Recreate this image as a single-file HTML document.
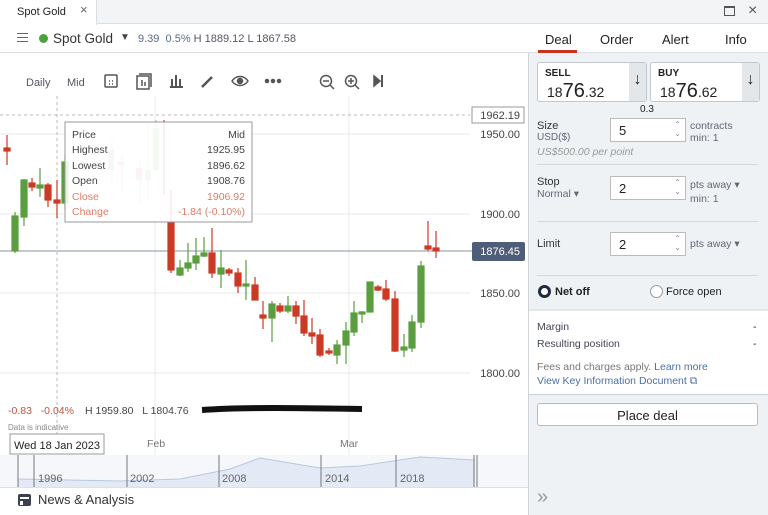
<!DOCTYPE html>
<html><head><meta charset="utf-8"><style>
*{box-sizing:border-box;margin:0;padding:0}
body{width:768px;height:515px;overflow:hidden;background:#fff;font-family:"Liberation Sans",sans-serif;color:#222;position:relative;font-size:12px}
.abs{position:absolute}
.tabbar{left:0;top:0;width:768px;height:24px;background:#f3f4f5;border-bottom:1px solid #dcdfe2}
.tab{left:0;top:0;width:97px;height:25px;background:#fff;border-right:1px solid #dcdfe2;font-size:11px;padding:6px 0 0 17px}
.rp{left:528px;top:53px;width:240px;height:462px;background:#eef2f4;border-left:1px solid #cfd4d8}
.box{background:#fff;border:1px solid #c3c8cc;border-radius:3px}
.lbl{font-size:11px;color:#333}
.gray{color:#667}
</style></head><body>
<div class="abs tabbar"></div>
<div class="abs tab">Spot Gold<span style="position:absolute;left:80px;top:4px;color:#666;font-size:13px;line-height:12px">×</span></div>
<div class="abs" style="left:724px;top:6px;width:11px;height:10px;border:1.5px solid #555;border-top-width:2.5px"></div>
<div class="abs" style="left:748px;top:2px;font-size:16px;color:#555">×</div>
<!-- header -->
<div class="abs" style="left:0;top:24px;width:528px;height:29px;border-bottom:1px solid #dcdfe2"></div>
<div class="abs" style="left:17px;top:33px;width:11px;height:9px;border-top:1.5px solid #666;border-bottom:1.5px solid #666"><div style="margin-top:2.5px;height:1.5px;background:#666"></div></div>
<div class="abs" style="left:39px;top:34px;width:9px;height:9px;border-radius:50%;background:#4aa33a"></div>
<div class="abs" style="left:53px;top:31px;font-size:13.5px;color:#333">Spot Gold</div>
<div class="abs" style="left:120px;top:32px;font-size:10px;color:#444">▼</div>
<div class="abs" style="left:138px;top:33px;font-size:11px;color:#5a6a88">9.39&nbsp; 0.5% <span style="color:#556">H 1889.12 L 1867.58</span></div>
<!-- right tabs -->
<div class="abs" style="left:528px;top:24px;width:240px;height:29px;border-bottom:1px solid #dcdfe2"></div>
<div class="abs" style="left:545px;top:32px;font-size:13px">Deal</div>
<div class="abs" style="left:538px;top:50px;width:39px;height:3px;background:#c8321e"></div>
<div class="abs" style="left:600px;top:32px;font-size:13px">Order</div>
<div class="abs" style="left:662px;top:32px;font-size:13px">Alert</div>
<div class="abs" style="left:725px;top:32px;font-size:13px">Info</div>

<!-- toolbar -->
<div class="abs" style="left:26px;top:77px;font-size:11px;color:#556">Daily</div>
<div class="abs" style="left:67px;top:77px;font-size:11px;color:#556">Mid</div>
<svg class="abs" style="left:100px;top:70px" width="290" height="26" fill="none" stroke="#555" stroke-width="1.5">
<rect x="5" y="5" width="12" height="12" rx="1"/><path d="M9 11h1M12 11h1M9 14h1M12 14h1M15 11h0" />
<rect x="37" y="6" width="12" height="13"/><path d="M39 4h12v13M42 10v6M45 12v4"/>
<path d="M70 17h13M72 9v7M76 5v11M80 9v7" stroke-width="2"/>
<path d="M102 17l10-10" stroke-width="2.5"/>
<path d="M132 11c4-6 12-6 16 0c-4 6-12 6-16 0z"/><circle cx="140" cy="11" r="2.5" fill="#555"/>
<circle cx="167" cy="11" r="1.5" fill="#555"/><circle cx="173" cy="11" r="1.5" fill="#555"/><circle cx="179" cy="11" r="1.5" fill="#555"/>
<circle cx="226" cy="11" r="5.5"/><path d="M223 11h6M230 15l4 4"/>
<circle cx="251" cy="11" r="5.5"/><path d="M248 11h6M251 8v6M255 15l4 4"/>
<path d="M274 6l6 5-6 5z" fill="#555"/><path d="M282 5v12" stroke-width="2"/>
</svg>

<!-- chart -->
<svg class="abs" style="left:0;top:96px" width="528" height="360">
<g transform="translate(0,-96)">
<g stroke="#e6e8ec" stroke-width="1"><path d="M0 134H470M0 214H470M0 293H470M0 373H470M155 96V455M349 96V455"/></g>
<path d="M0 115H470" stroke="#bbb" stroke-dasharray="3 3"/>
<path d="M57 96V455" stroke="#bbb" stroke-dasharray="3 3"/>
<path d="M0 251H472" stroke="#8a96a8"/>
<g stroke-width="1.2">
<!-- candles: wick then body -->
<g stroke="#cc3a26" fill="#cc3a26">
<path d="M7 135V165M32 178V191M48 183V207M57 180V218M164 120V195M171 190V273M212 228V278M229 268V276M238 268V293M255 277V300M263 301V329M280 303V313M296 301V324M304 300V336M312 318V344M320 329V357M329 348V355M378 285V291M386 280V301M395 291V352M428 221V251M436 231V258"/>
<rect x="4" y="148" width="6" height="3"/><rect x="29" y="183" width="6" height="4"/><rect x="45" y="185" width="6" height="15"/><rect x="54" y="200" width="6" height="3"/>
<rect x="168" y="222" width="6" height="48"/><rect x="209" y="253" width="6" height="20"/><rect x="226" y="270" width="6" height="3"/><rect x="235" y="273" width="6" height="13"/><rect x="252" y="285" width="6" height="15"/>
<rect x="260" y="315" width="6" height="3"/><rect x="277" y="306" width="6" height="5"/><rect x="293" y="306" width="6" height="10"/><rect x="301" y="316" width="6" height="17"/><rect x="309" y="333" width="6" height="3"/><rect x="317" y="335" width="6" height="20"/><rect x="326" y="351" width="6" height="2"/>
<rect x="375" y="287" width="6" height="3"/><rect x="383" y="289" width="6" height="10"/><rect x="392" y="299" width="6" height="52"/><rect x="425" y="246" width="6" height="3"/><rect x="433" y="248" width="6" height="3"/>
</g>
<g stroke="#5a9e3f" fill="#5a9e3f">
<path d="M15 212V253M24 179V226M40 168V197M65 155V210M180 260V276M188 243V272M196 238V270M204 237V257M221 250V288M246 260V300M272 301V342M288 296V313M337 340V364M346 322V364M354 301V336M362 311V323M370 282V312M404 334V357M412 315V352M421 261V328"/>
<rect x="12" y="216" width="6" height="35"/><rect x="21" y="180" width="6" height="37"/><rect x="37" y="185" width="6" height="3"/><rect x="62" y="162" width="6" height="41"/>
<rect x="177" y="268" width="6" height="7"/><rect x="185" y="263" width="6" height="5"/><rect x="193" y="256" width="6" height="7"/><rect x="201" y="253" width="6" height="3"/><rect x="218" y="268" width="6" height="6"/><rect x="243" y="284" width="6" height="2"/>
<rect x="269" y="304" width="6" height="14"/><rect x="285" y="306" width="6" height="5"/><rect x="334" y="345" width="6" height="10"/><rect x="343" y="331" width="6" height="14"/><rect x="351" y="313" width="6" height="19"/><rect x="359" y="312" width="6" height="2"/><rect x="367" y="282" width="6" height="30"/>
<rect x="401" y="347" width="6" height="3"/><rect x="409" y="322" width="6" height="26"/><rect x="418" y="266" width="6" height="56"/>
</g>
<g opacity=".5"><path d="M112 140V185M122 155V190M140 160V205M148 125V200M156 120V170" stroke="#5a9e3f"/>
<rect x="108" y="150" width="6" height="20" fill="#5a9e3f"/><rect x="118" y="162" width="6" height="3" fill="#cc3a26"/><rect x="136" y="168" width="6" height="12" fill="#cc3a26"/><rect x="145" y="170" width="6" height="10" fill="#5a9e3f"/><rect x="153" y="128" width="6" height="42" fill="#5a9e3f"/></g>
</g>
<rect x="65" y="122" width="187" height="100" fill="#fff" fill-opacity=".88" stroke="#999"/>
<g font-size="10.5" font-family="Liberation Sans" fill="#444">
<text x="72" y="138">Price</text><text x="245" y="138" text-anchor="end">Mid</text>
<text x="72" y="153">Highest</text><text x="245" y="153" text-anchor="end">1925.95</text>
<text x="72" y="169">Lowest</text><text x="245" y="169" text-anchor="end">1896.62</text>
<text x="72" y="184">Open</text><text x="245" y="184" text-anchor="end">1908.76</text>
<g fill="#e07a68"><text x="72" y="200">Close</text><text x="245" y="200" text-anchor="end">1906.92</text>
<text x="72" y="215">Change</text><text x="245" y="215" text-anchor="end">-1.84 (-0.10%)</text></g>
</g>
<rect x="472" y="107" width="52" height="16" fill="#fff" stroke="#999"/>
<rect x="472" y="242" width="53" height="19" rx="2" fill="#4f5e78"/>
<g font-size="11" font-family="Liberation Sans" fill="#444" text-anchor="end">
<text x="520" y="119">1962.19</text><text x="520" y="138">1950.00</text><text x="520" y="218">1900.00</text><text x="520" y="255" fill="#fff">1876.45</text><text x="520" y="297">1850.00</text><text x="520" y="377">1800.00</text></g>
<g font-size="10.5" font-family="Liberation Sans">
<text x="8" y="414" fill="#c0553e">-0.83&nbsp;&nbsp; -0.04%</text><text x="85" y="414" fill="#444">H 1959.80&nbsp;&nbsp; L 1804.76</text>
<text x="8" y="430" font-size="8" fill="#888">Data is indicative</text>
<text x="147" y="447" fill="#777">Feb</text><text x="340" y="447" fill="#777">Mar</text></g>
<path d="M202 410c40-3 100-2 160-1" stroke="#111" stroke-width="6"/>
<rect x="10" y="434" width="94" height="20" fill="#fff" stroke="#999"/>
<text x="14" y="449" font-size="11" font-family="Liberation Sans" fill="#222">Wed 18 Jan 2023</text>
</g>
</svg>
<!-- navigator -->
<svg class="abs" style="left:0;top:455px" width="528" height="32">
<rect width="528" height="32" fill="#f6f7fa"/>
<path d="M18 24L120 26L180 24L200 20L230 14L260 3L290 8L320 13L360 11L420 2L475 5L475 32L18 32z" fill="#e3eaf5"/>
<path d="M18 24L120 26L180 24L200 20L230 14L260 3L290 8L320 13L360 11L420 2L475 5" fill="none" stroke="#b8c8e0"/>
<g stroke="#777"><path d="M18 0V32M34 0V32M127 0V32M219 0V32M321 0V32M396 0V32M474 0V32M477 0V32"/></g>
<g font-size="11" font-family="Liberation Sans" fill="#666"><text x="38" y="27">1996</text><text x="130" y="27">2002</text><text x="222" y="27">2008</text><text x="325" y="27">2014</text><text x="400" y="27">2018</text></g>
</svg>
<div class="abs" style="left:0;top:487px;width:528px;height:28px;border-top:1px solid #e0e0e0"></div>
<div class="abs" style="left:18px;top:494px;width:13px;height:12px;background:#3a4050;border-radius:2px"><div style="margin:3px 2px;width:9px;height:2px;background:#fff"></div><div style="margin:-1px 2px;width:3px;height:4px;background:#fff"></div></div>
<div class="abs" style="left:38px;top:492px;font-size:13px;color:#333">News &amp; Analysis</div>

<!-- right panel -->
<div class="abs rp"></div>
<div class="abs box" style="left:537px;top:62px;width:110px;height:40px"></div>
<div class="abs" style="left:629px;top:63px;width:17px;height:38px;background:#e3e7ea;font-size:16px;text-align:center;padding-top:8px">↓</div>
<div class="abs" style="left:545px;top:68px;font-size:10px;font-weight:bold">SELL</div>
<div class="abs" style="left:547px;top:80px;font-size:14px">18<span style="font-size:20px">76</span>.32</div>
<div class="abs box" style="left:650px;top:62px;width:110px;height:40px"></div>
<div class="abs" style="left:742px;top:63px;width:17px;height:38px;background:#e3e7ea;font-size:16px;text-align:center;padding-top:8px">↓</div>
<div class="abs" style="left:658px;top:68px;font-size:10px;font-weight:bold">BUY</div>
<div class="abs" style="left:660px;top:80px;font-size:14px">18<span style="font-size:20px">76</span>.62</div>
<div class="abs" style="left:640px;top:104px;font-size:10px">0.3</div>

<div class="abs lbl" style="left:537px;top:120px">Size</div>
<div class="abs gray" style="left:537px;top:132px;font-size:10px">USD($)</div>
<div class="abs" style="left:537px;top:146px;font-size:10.5px;color:#999;font-style:italic">US$500.00 per point</div>
<div class="abs" style="left:610px;top:118px;width:76px;height:24px;background:#fff;border:1px solid #bbb;font-size:13px;padding:4px 0 0 8px">5<span style="position:absolute;right:4px;top:1px;font-size:8px;color:#888;line-height:9px">⌃<br>⌄</span></div>
<div class="abs gray" style="left:690px;top:120px;font-size:10.5px;line-height:12px">contracts<br>min: 1</div>
<div class="abs" style="left:537px;top:164px;width:221px;height:1px;background:#d4d8dc"></div>

<div class="abs lbl" style="left:537px;top:176px">Stop</div>
<div class="abs gray" style="left:537px;top:188px;font-size:10.5px">Normal ▾</div>
<div class="abs" style="left:610px;top:176px;width:76px;height:24px;background:#fff;border:1px solid #bbb;font-size:13px;padding:4px 0 0 8px">2<span style="position:absolute;right:4px;top:1px;font-size:8px;color:#888;line-height:9px">⌃<br>⌄</span></div>
<div class="abs gray" style="left:690px;top:178px;font-size:10.5px;line-height:14px">pts away ▾<br>min: 1</div>
<div class="abs" style="left:537px;top:221px;width:221px;height:1px;background:#d4d8dc"></div>

<div class="abs lbl" style="left:537px;top:238px">Limit</div>
<div class="abs" style="left:610px;top:232px;width:76px;height:24px;background:#fff;border:1px solid #bbb;font-size:13px;padding:4px 0 0 8px">2<span style="position:absolute;right:4px;top:1px;font-size:8px;color:#888;line-height:9px">⌃<br>⌄</span></div>
<div class="abs gray" style="left:690px;top:238px;font-size:10.5px">pts away ▾</div>
<div class="abs" style="left:537px;top:275px;width:221px;height:1px;background:#d4d8dc"></div>

<div class="abs" style="left:538px;top:285px;width:13px;height:13px;border-radius:50%;border:3.5px solid #1e2a40;background:#fff"></div>
<div class="abs" style="left:555px;top:286px;font-size:11px;font-weight:bold;color:#222">Net off</div>
<div class="abs" style="left:650px;top:285px;width:13px;height:13px;border-radius:50%;border:1px solid #999;background:#fff"></div>
<div class="abs" style="left:666px;top:286px;font-size:11px;color:#222">Force open</div>

<div class="abs" style="left:529px;top:309px;width:239px;height:86px;background:#fff;border-top:2px solid #e4e7ea;border-bottom:1px solid #ccd"></div>
<div class="abs" style="left:537px;top:321px;font-size:10.5px;color:#445">Margin</div>
<div class="abs" style="left:753px;top:321px;font-size:10.5px">-</div>
<div class="abs" style="left:537px;top:338px;font-size:10.5px;color:#445">Resulting position</div>
<div class="abs" style="left:753px;top:338px;font-size:10.5px">-</div>
<div class="abs" style="left:537px;top:361px;font-size:10.5px;color:#777">Fees and charges apply. <span style="color:#4a6ea8">Learn more</span></div>
<div class="abs" style="left:537px;top:375px;font-size:10.5px;color:#4a6ea8">View Key Information Document ⧉</div>
<div class="abs box" style="left:537px;top:403px;width:221px;height:23px;font-size:13px;text-align:center;padding-top:4px;border-color:#bbb">Place deal</div>
<div class="abs" style="left:537px;top:486px;font-size:20px;color:#999">»</div>
</body></html>
